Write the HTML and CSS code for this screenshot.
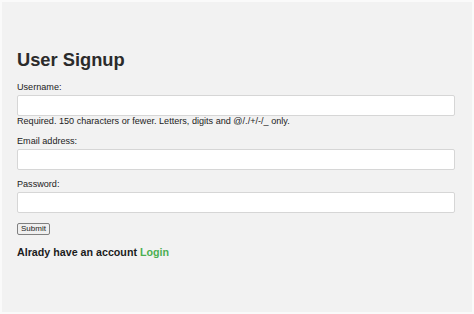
FILE: index.html
```html
<!DOCTYPE html>
<html lang="en">
<head>
  <meta charset="UTF-8">
  <meta name="viewport" content="width=device-width, initial-scale=1.0">
  <title>User Signup</title>
  <link rel="stylesheet" href="styles.css">
</head>
<body>
  <div id="app">
    <h1>User Signup</h1>
    <form id="signup-form">
      <div class="field">
        <label for="id_username">Username:</label>
        <input type="text" id="id_username" name="username">
        <span class="helptext">Required. 150 characters or fewer. Letters, digits and @/./+/-/_ only.</span>
      </div>
      <div class="field">
        <label for="id_email">Email address:</label>
        <input type="email" id="id_email" name="email">
      </div>
      <div class="field">
        <label for="id_password">Password:</label>
        <input type="password" id="id_password" name="password">
      </div>
      <button type="submit">Submit</button>
    </form>
    <h3 class="login-link">Alrady have an account <a href="#">Login</a></h3>
  </div>
</body>
</html>
```

FILE: styles.css
```css
/* Global Styles */
body {
  margin: 0;
  padding: 2px;
  background: #fafafa;
  font-family: 'Liberation Sans', Arial, sans-serif;
  font-size: 9.1px;
  color: #222;
}
#app {
  height: 310px;
  box-sizing: border-box;
  padding: 34px 17px 0 15px;
  background: #f2f2f2;
}

h1 {
  font-size: 18.3px;
  margin: 13px 0 11px;
  color: #2b2b2b;
}

/* Form */
.field {
  display: flex;
  flex-direction: column;
  margin-bottom: 9px;
}
label {
  line-height: 11px;
  margin-bottom: 2px;
}
input {
  height: 21px;
  box-sizing: border-box;
  border: 1px solid #d6d6d6;
  border-radius: 2px;
  background: #fff;
  outline: none;
}
.helptext {
  line-height: 11px;
}
button {
  font-family: inherit;
  font-size: 8px;
  line-height: 8px;
  padding: 1px 3px;
  margin-top: 1px;
  background: #efefef;
  border: 1px solid #808080;
  border-radius: 2px;
  color: #222;
}

/* Login link */
.login-link {
  font-size: 10.7px;
  margin: 11px 0;
  color: #1c1c1c;
}
.login-link a {
  color: #4caf50;
  text-decoration: none;
}
```
